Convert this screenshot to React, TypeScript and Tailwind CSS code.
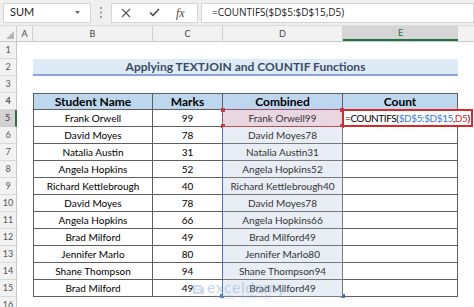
import React from "react";

const rows: [string, number][] = [
  ["Frank Orwell", 99],
  ["David Moyes", 78],
  ["Natalia Austin", 31],
  ["Angela Hopkins", 52],
  ["Richard Kettlebrough", 40],
  ["David Moyes", 78],
  ["Angela Hopkins", 66],
  ["Brad Milford", 49],
  ["Jennifer Marlo", 80],
  ["Shane Thompson", 94],
  ["Brad Milford", 49],
];

function RowHead({ n, active }: { n: number; active?: boolean }) {
  return (
    <div
      className={
        active
          ? "w-[17px] shrink-0 h-full bg-[#D2D2D2] border-r-2 border-r-[#217346] border-b border-b-[#C8C8C8] flex items-center justify-center text-[9px] text-[#3B3B3B]"
          : "w-[17px] shrink-0 h-full bg-[#F2F2F2] border-r border-r-[#C8C8C8] border-b border-b-[#D9D9D9] flex items-center justify-center text-[9px] text-[#555]"
      }
    >
      {n}
    </div>
  );
}

function Empty({ n }: { n: number }) {
  return (
    <div className="flex h-[17px]">
      <RowHead n={n} />
      <div className="flex-1 bg-white" />
    </div>
  );
}

export default function App() {
  return (
    <div className="relative w-[474px] h-[307px] overflow-hidden bg-white font-['Lato',sans-serif] text-black">
      {/* formula bar */}
      <div className="h-[26px] bg-[#EFEFEF] flex items-center pl-[3px] border-b border-[#DADADA]">
        <div className="w-[88px] h-[20px] bg-white border border-[#D4D4D4] flex items-center pl-[6px] text-[11px] text-[#222]">
          SUM
          <svg className="ml-auto mr-[10px]" width="5" height="3" viewBox="0 0 5 3">
            <path d="M0 0 L5 0 L2.5 3 Z" fill="#666" />
          </svg>
        </div>
        <div className="w-[20px] flex justify-center">
          <svg width="2" height="11" viewBox="0 0 2 11">
            <rect x="0" y="0" width="2" height="2" fill="#A0A0A0" />
            <rect x="0" y="4.5" width="2" height="2" fill="#A0A0A0" />
            <rect x="0" y="9" width="2" height="2" fill="#A0A0A0" />
          </svg>
        </div>
        <div className="w-[87px] h-[20px] bg-white border border-[#D4D4D4] flex items-center">
          <svg className="ml-[9px]" width="10" height="10" viewBox="0 0 10 10">
            <path d="M1 1 L9 9 M9 1 L1 9" stroke="#555" strokeWidth="1.1" />
          </svg>
          <svg className="ml-[18px]" width="11" height="9" viewBox="0 0 11 9">
            <path d="M1 4.5 L4 7.5 L10 1" stroke="#444" strokeWidth="1.5" fill="none" />
          </svg>
          <span className="ml-[16px] text-[12px] italic text-[#444] font-['Liberation_Serif',serif]">fx</span>
        </div>
        <div className="flex-1 h-[20px] ml-[3px] bg-white border border-[#D4D4D4] flex items-center pl-[10px] text-[10px] text-[#222] font-['Open_Sans',sans-serif]">
          =COUNTIFS($D$5:$D$15,D5)
        </div>
      </div>

      {/* column headers */}
      <div className="flex h-[16px] bg-[#F2F2F2] border-b border-[#C8C8C8] text-[9px] text-[#444]">
        <div className="w-[17px] shrink-0 relative border-r border-[#D0D0D0]">
          <svg className="absolute right-[2px] bottom-[2px]" width="8" height="8" viewBox="0 0 8 8">
            <path d="M8 0 L8 8 L0 8 Z" fill="#B5B5B5" />
          </svg>
        </div>
        <div className="w-[16px] shrink-0 flex items-center justify-center border-r border-[#D0D0D0]">A</div>
        <div className="w-[120px] shrink-0 flex items-center justify-center border-r border-[#D0D0D0]">B</div>
        <div className="w-[70px] shrink-0 flex items-center justify-center border-r border-[#D0D0D0]">C</div>
        <div className="w-[120px] shrink-0 flex items-center justify-center border-r border-[#D0D0D0]">D</div>
        <div className="w-[115px] shrink-0 flex items-center justify-center bg-[#D5D5D5] border-b-2 border-[#217346] text-[#217346]">E</div>
        <div className="flex-1" />
      </div>

      <Empty n={1} />

      {/* title row */}
      <div className="flex h-[17px]">
        <RowHead n={2} />
        <div className="w-[16px] shrink-0" />
        <div className="w-[425px] shrink-0 bg-[#DDEBF7] border-b-2 border-[#8FA3DE] flex items-center justify-center text-[12px] font-bold text-[#3B4B63]">
          Applying TEXTJOIN and COUNTIF Functions
        </div>
        <div className="flex-1" />
      </div>

      <Empty n={3} />

      {/* header row */}
      <div className="flex h-[17px] text-[12px] font-bold">
        <RowHead n={4} />
        <div className="w-[16px] shrink-0" />
        <div className="w-[120px] shrink-0 bg-[#BDD7EE] border border-[#5F5F5F] flex items-center justify-center">Student Name</div>
        <div className="w-[70px] shrink-0 bg-[#BDD7EE] border-t border-r border-b border-[#5F5F5F] flex items-center justify-center">Marks</div>
        <div className="w-[120px] shrink-0 bg-[#BDD7EE] border-t border-r border-b border-[#5F5F5F] flex items-center justify-center">Combined</div>
        <div className="w-[115px] shrink-0 bg-[#BDD7EE] border-t border-r border-b border-[#5F5F5F] flex items-center justify-center">Count</div>
        <div className="flex-1" />
      </div>

      {rows.map(([name, mark], i) => {
        const first = i === 0;
        return (
          <div key={i} className="flex h-[17px] text-[10px]">
            <RowHead n={5 + i} active={first} />
            <div className="w-[16px] shrink-0" />
            <div className="w-[120px] shrink-0 border-l border-r border-b border-[#5F5F5F] flex items-center justify-center">{name}</div>
            <div className="w-[70px] shrink-0 border-r border-b border-[#5F5F5F] flex items-center justify-center">{mark}</div>
            <div
              className={
                first
                  ? "relative w-[120px] shrink-0 bg-[#EAD6E0] border-r border-b border-[#7A7A7A] flex items-center justify-center text-[#333]"
                  : "relative w-[120px] shrink-0 bg-[#E9EEF6] border-r border-b border-[#7A7A7A] flex items-center justify-center text-[#333]"
              }
            >
              {name}
              {mark}
              {first && (
                <>
                  <div className="absolute left-[-1px] top-[-1px] w-[121px] h-[188px] border border-[#4A76C8] pointer-events-none" />
                  <div className="absolute left-[-1px] top-[-1px] w-[121px] h-[18px] border border-dashed border-[#D0393F]" />
                  <div className="absolute left-[-2px] top-[-2px] w-[4px] h-[4px] bg-[#D0393F]" />
                  <div className="absolute right-[-2px] top-[-2px] w-[4px] h-[4px] bg-[#D0393F]" />
                  <div className="absolute left-[-2px] bottom-[-2px] w-[4px] h-[4px] bg-[#D0393F]" />
                  <div className="absolute right-[-2px] bottom-[-2px] w-[4px] h-[4px] bg-[#D0393F]" />
                  <div className="absolute left-[-3px] top-[184px] w-[4px] h-[4px] bg-[#4A76C8]" />
                  <div className="absolute right-[-3px] top-[184px] w-[4px] h-[4px] bg-[#4A76C8]" />
                </>
              )}
            </div>
            <div className="relative w-[115px] shrink-0 border-r border-b border-[#5F5F5F]">
              {first && (
                <div className="absolute left-[-1px] top-[-1px] w-[131px] h-[18px] bg-white border-2 border-[#D42A2A] flex items-center pl-[1px] whitespace-nowrap text-[10px] tracking-[-0.4px] text-black z-10">
                  =COUNTIFS(<span className="text-[#3A78D0]">$D$5:$D$15</span>,<span className="text-[#D42A2A]">D5</span>)
                </div>
              )}
            </div>
            <div className="flex-1" />
          </div>
        );
      })}

      <Empty n={16} />

      {/* watermark */}
      <div className="absolute left-[192px] top-[279px] flex items-center opacity-50 pointer-events-none">
        <svg width="13" height="13" viewBox="0 0 13 13">
          <path d="M1 2 L9 2 L12 5 L12 11 L1 11 Z" fill="#9DB7D8" />
          <path d="M3 5 L9 5 M3 8 L8 8" stroke="#fff" strokeWidth="1.3" />
        </svg>
        <div className="ml-[2px] flex flex-col leading-none">
          <span className="text-[16px] text-[#8FB0D8] tracking-[0.5px]">exceldemy</span>
          <span className="text-[5px] text-[#8FB0D8] tracking-[1px] ml-[8px]">EXCEL · DATA · BI</span>
        </div>
      </div>
    </div>
  );
}
